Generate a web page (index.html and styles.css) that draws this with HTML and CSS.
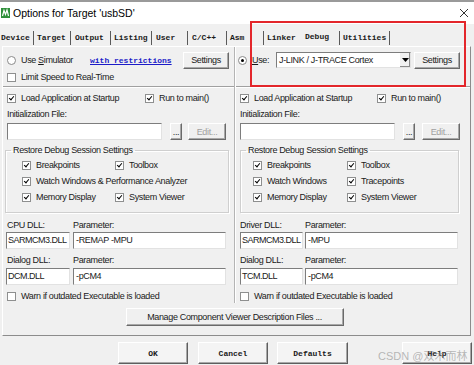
FILE: index.html
```html
<!DOCTYPE html>
<html lang="en">
<head>
  <meta charset="UTF-8">
  <title>Options for Target 'usbSD'</title>
  <link rel="stylesheet" href="styles.css">
</head>
<body>
  <div class="window">
    <div class="titlebar">
      <span class="app-icon">
        <svg width="9" height="10" viewBox="0 0 9 10">
          <rect x="0" y="0" width="9" height="10" fill="#2f8f3a"/>
          <path d="M1.5 8 L3 2.5 L4.5 6.5 L6 2 L7.5 8" stroke="#fff" stroke-width="1.2" fill="none"/>
        </svg>
      </span>
      <span class="title">Options for Target 'usbSD'</span>
      <span class="close">
        <svg width="10" height="10" viewBox="0 0 10 10">
          <path d="M1 1 L9 9 M9 1 L1 9" stroke="#333" stroke-width="1"/>
        </svg>
      </span>
    </div>

    <div class="tabs">
      <span class="tab t-device">Device</span>
      <span class="tab t-target">Target</span>
      <span class="tab t-output">Output</span>
      <span class="tab t-listing">Listing</span>
      <span class="tab t-user">User</span>
      <span class="tab t-cc">C/C++</span>
      <span class="tab t-asm">Asm</span>
      <span class="tab t-linker">Linker</span>
      <span class="tab t-debug active">Debug</span>
      <span class="tab t-util">Utilities</span>
    </div>

    <div class="page">
      <div class="cols">
        <!-- simulator side -->
        <div class="col col-left">
          <div class="row r-use">
            <label class="radio use-sim"><span class="rb"></span><span>Use <u>S</u>imulator</span></label>
            <a class="link">with restrictions</a>
            <button class="btn settings">Settings</button>
          </div>
          <div class="row r-limit">
            <label class="check"><span class="cb"></span>Limit Speed to Real-Time</label>
          </div>
          <div class="sep"></div>
          <div class="row r-load">
            <label class="check on load"><span class="cb"></span>Load Application at Startup</label>
            <label class="check on"><span class="cb"></span>Run to main()</label>
          </div>
          <div class="lbl">Initialization File:</div>
          <div class="row r-init">
            <span class="field init"></span>
            <button class="btn dots">...</button>
            <button class="btn edit" disabled>Edit...</button>
          </div>
          <fieldset class="group">
            <legend>Restore Debug Session Settings</legend>
            <div class="grid">
              <label class="check on"><span class="cb"></span>Breakpoints</label>
              <label class="check on"><span class="cb"></span>Toolbox</label>
              <label class="check on wide"><span class="cb"></span>Watch Windows &amp; Performance Analyzer</label>
              <label class="check on"><span class="cb"></span>Memory Display</label>
              <label class="check on"><span class="cb"></span>System Viewer</label>
            </div>
          </fieldset>
          <div class="dll-labels"><span class="dll-name">CPU DLL:</span><span>Parameter:</span></div>
          <div class="dll-fields"><span class="field dll">SARMCM3.DLL</span><span class="field param">-REMAP -MPU</span></div>
          <div class="dll-labels second"><span class="dll-name">Dialog DLL:</span><span>Parameter:</span></div>
          <div class="dll-fields second"><span class="field dll">DCM.DLL</span><span class="field param">-pCM4</span></div>
          <div class="row r-warn">
            <label class="check"><span class="cb"></span>Warn if outdated Executable is loaded</label>
          </div>
        </div>

        <!-- target driver side -->
        <div class="col col-right">
          <div class="row r-use">
            <label class="radio use-drv"><span class="rb on"></span><span><u>U</u>se:</span></label>
            <span class="select"><span class="select-text">J-LINK / J-TRACE Cortex</span><span class="select-arrow"><svg width="7" height="4" viewBox="0 0 7 4"><path d="M0 0 H7 L3.5 4 Z" fill="#000"/></svg></span></span>
            <button class="btn settings">Settings</button>
          </div>
          <div class="row r-limit"></div>
          <div class="sep"></div>
          <div class="row r-load">
            <label class="check on load"><span class="cb"></span>Load Application at Startup</label>
            <label class="check on"><span class="cb"></span>Run to main()</label>
          </div>
          <div class="lbl">Initialization File:</div>
          <div class="row r-init">
            <span class="field init"></span>
            <button class="btn dots">...</button>
            <button class="btn edit" disabled>Edit...</button>
          </div>
          <fieldset class="group">
            <legend>Restore Debug Session Settings</legend>
            <div class="grid">
              <label class="check on"><span class="cb"></span>Breakpoints</label>
              <label class="check on"><span class="cb"></span>Toolbox</label>
              <label class="check on"><span class="cb"></span>Watch Windows</label>
              <label class="check on"><span class="cb"></span>Tracepoints</label>
              <label class="check on"><span class="cb"></span>Memory Display</label>
              <label class="check on"><span class="cb"></span>System Viewer</label>
            </div>
          </fieldset>
          <div class="dll-labels"><span class="dll-name">Driver DLL:</span><span>Parameter:</span></div>
          <div class="dll-fields"><span class="field dll">SARMCM3.DLL</span><span class="field param">-MPU</span></div>
          <div class="dll-labels second"><span class="dll-name">Dialog DLL:</span><span>Parameter:</span></div>
          <div class="dll-fields second"><span class="field dll">TCM.DLL</span><span class="field param">-pCM4</span></div>
          <div class="row r-warn">
            <label class="check"><span class="cb"></span>Warn if outdated Executable is loaded</label>
          </div>
        </div>
      </div>
      <div class="manage-row">
        <button class="btn manage">Manage Component Viewer Description Files ...</button>
      </div>
    </div>

    <div class="footer">
      <button class="btn dlg ok">OK</button>
      <button class="btn dlg cancel">Cancel</button>
      <button class="btn dlg defaults">Defaults</button>
      <button class="btn dlg help">Help</button>
    </div>

    <div class="highlight"></div>
    <div class="watermark">CSDN @双木而林</div>
  </div>
</body>
</html>
```

FILE: styles.css
```css
* { box-sizing: border-box; }
html, body {
  margin: 0;
  height: 100%;
  background-color: #f0f0f0;
  font-family: 'Liberation Sans', Arial, sans-serif;
  font-size: 9px;
  letter-spacing: -0.35px;
  color: #1a1a1a;
  overflow: hidden;
}
.window {
  position: relative;
  width: 474px;
  height: 365px;
  border-top: 2px solid #9a9a9a;
}

/* title bar */
.titlebar {
  height: 22px;
  background-color: #ffffff;
  display: flex;
  align-items: center;
  padding-left: 1px;
}
.app-icon { display: flex; width: 9px; height: 10px; }
.title {
  margin-left: 3px;
  font-size: 10.5px;
  letter-spacing: 0;
  color: #000;
}
.close { display: flex; margin-left: auto; margin-right: 5px; }

/* tab strip */
.tabs {
  height: 22px;
  display: flex;
  padding-top: 7px;
  font-family: 'Liberation Mono', monospace;
  font-weight: bold;
  font-size: 8px;
  letter-spacing: 0;
  color: #1a1a1a;
}
.tab {
  height: 14px;
  line-height: 14px;
  padding-left: 3px;
  border-right: 1px solid #5a5a5a;
  white-space: nowrap;
}
.t-device { width: 34px; padding-left: 1px; }
.t-target { width: 37px; }
.t-output { width: 40px; padding-left: 4px; }
.t-listing { width: 41px; }
.t-user { width: 36px; padding-left: 4px; }
.t-cc { width: 39px; padding-left: 4px; }
.t-asm { width: 37px; }
.t-linker { width: 37px; border-right: none; }
.t-debug { width: 39px; padding-left: 4px; line-height: 11px; }
.t-util { width: 50px; }

/* tab page */
.page {
  margin-left: 2px;
  width: 469px;
  height: 290px;
  border: 1px solid #8c8c8c;
  border-top-color: #ffffff;
  border-left-color: #ffffff;
  display: flex;
  flex-direction: column;
}
.cols { display: flex; height: 256px; }
.col { padding-left: 4px; }
.col-left { width: 232px; border-right: 1px solid #b4b4b4; }
.col-right { flex: 1; border-left: 1px solid #ffffff; }

.row { display: flex; align-items: center; }
.r-use { margin-top: 3px; height: 20px; }
.r-limit { height: 14px; }
.sep {
  margin-top: 2px;
  margin-left: -4px;
  height: 2px;
  border-top: 1px solid #a0a0a0;
  border-bottom: 1px solid #ffffff;
}
.r-load { margin-top: 3px; height: 14px; }
.lbl { margin-top: 2px; height: 14px; line-height: 14px; }
.r-init { margin-top: 2px; height: 17px; }
.r-warn { margin-top: 4px; height: 14px; }

/* radios and checkboxes */
.radio, .check {
  display: flex;
  align-items: center;
  white-space: nowrap;
}
.rb {
  width: 9px;
  height: 9px;
  margin-right: 5px;
  border-radius: 50%;
  border: 1px solid #8a8a8a;
  background-color: #ffffff;
  display: flex;
  align-items: center;
  justify-content: center;
}
.rb.on::after {
  content: "";
  width: 3px;
  height: 3px;
  border-radius: 50%;
  background-color: #000;
}
.use-sim { width: 83px; }
.col-right .use-drv { width: 38px; margin-left: -2px; }
.cb {
  position: relative;
  width: 9px;
  height: 9px;
  margin-right: 5px;
  border: 1px solid #8e8f8f;
  background-color: #ffffff;
  flex: none;
}
.check.on .cb::after {
  content: "";
  position: absolute;
  left: 2px;
  top: 0;
  width: 2px;
  height: 4px;
  border-right: 1.5px solid #000;
  border-bottom: 1.5px solid #000;
  transform: rotate(40deg);
}
.load { width: 138px; }
.col-right .load { width: 137px; }

.link {
  font-family: 'Liberation Mono', monospace;
  font-weight: bold;
  font-size: 8px;
  letter-spacing: 0;
  color: #1c1cc8;
  text-decoration: underline;
}

/* buttons */
.btn {
  margin: 0;
  padding: 0;
  font-family: 'Liberation Sans', Arial, sans-serif;
  font-size: 9px;
  letter-spacing: -0.35px;
  color: #1a1a1a;
  background-color: #f0f0f0;
  border: 1px solid;
  border-color: #ffffff #6a6a6a #6a6a6a #ffffff;
  box-shadow: inset -1px -1px 0 #a8a8a8;
  white-space: nowrap;
}
.settings { margin-left: auto; margin-right: 5px; width: 46px; height: 17px; }
.col-right .settings { margin-left: 3px; margin-right: 0; }
.dots { margin-left: 8px; width: 12px; height: 17px; line-height: 8px; }
.edit { margin-left: 6px; width: 38px; height: 17px; color: #a0a0a0; }
.col-right .edit { margin-left: 7px; }

/* edit fields */
.field {
  display: block;
  height: 17px;
  line-height: 15px;
  padding-left: 2px;
  background-color: #ffffff;
  border: 1px solid;
  border-color: #7d7d7d #e2e2e2 #e2e2e2 #7d7d7d;
  white-space: nowrap;
  overflow: hidden;
}
.init { width: 155px; }

.select {
  display: flex;
  width: 135px;
  height: 16px;
  background-color: #ffffff;
  border: 1px solid;
  border-color: #7d7d7d #e2e2e2 #e2e2e2 #7d7d7d;
}
.select-text { flex: 1; line-height: 14px; padding-left: 2px; white-space: nowrap; }
.select-arrow {
  width: 11px;
  display: flex;
  align-items: center;
  justify-content: center;
  background-color: #f0f0f0;
  border-left: 1px solid #ffffff;
  box-shadow: inset -1px -1px 0 #8a8a8a;
}

/* group box */
.group {
  margin: 4px 0 0 -2px;
  padding: 0 0 7px;
  min-width: 0;
  width: 224px;
  border: 1px solid #cfcfcf;
  box-shadow: inset 1px 1px 0 #ffffff, 1px 1px 0 #ffffff;
}
.col-right .group { margin-left: 0; width: 219px; }
.group legend {
  margin-left: 5px;
  padding: 0 2px;
  height: 12px;
  line-height: 12px;
}
.grid {
  display: grid;
  grid-template-columns: 93px auto;
  grid-auto-rows: 16px;
  align-items: center;
  padding: 1px 0 0 16px;
}
.col-right .grid { grid-template-columns: 94px auto; padding-left: 12px; }
.grid .wide { grid-column: span 2; }

/* dll rows */
.dll-labels { display: flex; height: 14px; line-height: 14px; margin-top: 5px; }
.dll-labels.second { margin-top: 4px; }
.dll-name { width: 66px; }
.col-right .dll-name { width: 65px; }
.dll-fields { display: flex; margin-left: -1px; gap: 3px; }
.dll-fields.second { margin-top: 1px; }
.dll { width: 64px; padding-left: 1px; letter-spacing: -0.5px; }
.param { width: 153px; }
.col-right .dll-fields { margin-left: 0; gap: 2px; }
.col-right .dll { width: 63px; }

.manage-row {
  display: flex;
  justify-content: center;
  margin-top: 5px;
  padding-right: 4px;
}
.manage { width: 218px; height: 18px; }

/* dialog buttons */
.footer {
  display: flex;
  padding: 6px 0 0 118px;
}
.dlg {
  width: 70px;
  height: 22px;
  font-family: 'Liberation Mono', monospace;
  font-weight: bold;
  font-size: 8px;
  letter-spacing: 0;
  background-color: #f4f4f4;
  border-color: #ffffff #5e5e5e #5e5e5e #ffffff;
}
.cancel { margin-left: 10px; }
.defaults { margin-left: 9px; width: 71px; }
.help { margin-left: auto; margin-right: 2px; }

/* red annotation box drawn over the screenshot */
.highlight {
  position: absolute;
  left: 250px;
  top: 19px;
  width: 216px;
  height: 66px;
  border: 2px solid #e3262b;
}
.watermark {
  position: absolute;
  left: 378px;
  top: 345px;
  font-family: 'Liberation Sans', 'Noto Sans CJK SC', sans-serif;
  font-size: 11px;
  letter-spacing: 0;
  color: rgba(140, 140, 140, 0.6);
}
```
